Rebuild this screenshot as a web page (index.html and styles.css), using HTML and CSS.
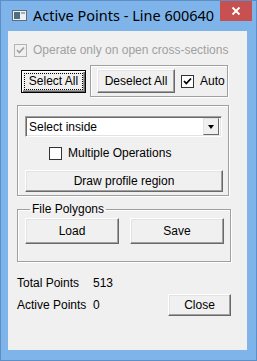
FILE: index.html
```html
<!DOCTYPE html>
<html lang="en">
  <head>
    <meta charset="UTF-8" />
    <title>Active Points - Line 600640</title>
    <link rel="stylesheet" href="styles.css">
  </head>
  <body>
    <div class="window">
      <!-- Title Bar -->
      <div class="titlebar">
        <svg class="app-icon" width="15" height="11" viewBox="0 0 15 11">
          <rect x="0.5" y="0.5" width="14" height="10" fill="#eef1f4" stroke="#5d6b78" />
          <rect x="2" y="2" width="6" height="7" fill="#4d6d80" />
          <rect x="9" y="2" width="4" height="2" fill="#9fb0bd" />
        </svg>
        <span class="title">Active Points - Line 600640</span>
        <div class="close-btn">
          <svg width="10" height="10" viewBox="0 0 10 10">
            <path d="M1.5 1.5 L8.5 8.5 M8.5 1.5 L1.5 8.5" stroke="#fff" stroke-width="1.8" />
          </svg>
        </div>
      </div>

      <!-- Dialog Client Area -->
      <div class="client">
        <label class="check disabled top-check">
          <span class="box"><svg width="9" height="9" viewBox="0 0 9 9"><path d="M1 4 L3.3 6.5 L8 1.5" /></svg></span>
          Operate only on open cross-sections
        </label>

        <div class="select-row">
          <button class="btn default select-all"><span class="focus">Select All</span></button>
          <div class="group deselect-group">
            <button class="btn deselect">Deselect All</button>
            <label class="check auto-check">
              <span class="box"><svg width="9" height="9" viewBox="0 0 9 9"><path d="M1 4 L3.3 6.5 L8 1.5" /></svg></span>
              Auto
            </label>
          </div>
        </div>

        <div class="group region-group">
          <div class="combo">
            <span class="combo-text">Select inside</span>
            <span class="combo-btn"><span class="arrow"></span></span>
          </div>
          <label class="check multi-check">
            <span class="box"></span>
            Multiple Operations
          </label>
          <button class="btn draw-btn">Draw profile region</button>
        </div>

        <fieldset class="files">
          <legend>File Polygons</legend>
          <button class="btn file-btn">Load</button>
          <button class="btn file-btn">Save</button>
        </fieldset>

        <div class="totals">
          <div class="stat-row">
            <span class="stat-label">Total Points</span>
            <span>513</span>
          </div>
          <div class="stat-row">
            <span class="stat-label">Active Points</span>
            <span>0</span>
            <button class="btn close">Close</button>
          </div>
        </div>
      </div>
    </div>
  </body>
</html>
```

FILE: styles.css
```css
/* General */
body {
  margin: 0;
  padding: 0;
  background: #ffffff;
  font-family: "Liberation Sans", Arial, sans-serif;
  font-size: 12px;
  color: #000;
}

/* Window Frame */
.window {
  width: 257px;
  height: 361px;
  box-sizing: border-box;
  border: 1px solid #5b8fc6;
  background: #7fb4ea;
  padding: 0 9px 10px 7px;
  display: flex;
  flex-direction: column;
}

.titlebar {
  height: 30px;
  display: flex;
  align-items: flex-start;
  position: relative;
}

.app-icon {
  margin: 9px 0 0 4px;
}

.title {
  margin: 4px 0 0 6px;
  font-family: "Noto Sans", sans-serif;
  font-size: 14.5px;
  line-height: 20px;
  color: #000;
}

.close-btn {
  position: absolute;
  top: 0;
  right: -5px;
  width: 32px;
  height: 20px;
  background: #c75050;
  display: flex;
  align-items: center;
  justify-content: center;
}

.client {
  flex: 1;
  background: #f0f0f0;
  padding: 0 0 0 9px;
}

/* Checkboxes */
.check {
  display: flex;
  align-items: center;
  line-height: 15px;
}

.box {
  width: 11px;
  height: 11px;
  border: 1px solid #333;
  background: #fff;
  margin-right: 6px;
  display: flex;
  align-items: center;
  justify-content: center;
}

.box path {
  fill: none;
  stroke: #000;
  stroke-width: 1.8;
}

.check.disabled {
  color: #a0a0a0;
}

.check.disabled .box {
  border-color: #b4b4b4;
  background: #f0f0f0;
}

.check.disabled .box path {
  stroke: #a0a0a0;
}

.top-check {
  margin: 12px 0 0 -3px;
}

/* Buttons */
.btn {
  font-family: inherit;
  font-size: 12px;
  color: #000;
  background: #f0f0f0;
  border: 1px solid;
  border-color: #fff #696969 #696969 #fff;
  box-shadow: inset -1px -1px 0 #a0a0a0, inset 1px 1px 0 #e3e3e3;
  padding: 0;
  margin: 0;
}

.btn.default {
  border: 1px solid #000;
  box-shadow: inset 1px 1px 0 #fff, inset -1px -1px 0 #696969, inset -2px -2px 0 #a0a0a0;
}

.focus {
  display: block;
  margin: 3px;
  height: 15px;
  line-height: 15px;
  outline: 1px dotted #000;
}

/* Group Boxes */
.group {
  border: 1px solid #a0a0a0;
  box-shadow: 1px 1px 0 #fff, inset 1px 1px 0 #fff;
}

.select-row {
  display: flex;
  align-items: flex-start;
  margin-top: 7px;
}

.select-all {
  width: 65px;
  height: 23px;
  margin: 5px 0 0 4px;
}

.deselect-group {
  width: 136px;
  height: 30px;
  margin-left: 4px;
  display: flex;
  align-items: flex-start;
}

.deselect {
  width: 78px;
  height: 24px;
  margin: 3px 0 0 6px;
}

.auto-check {
  margin: 8px 0 0 6px;
}

.region-group {
  width: 212px;
  height: 91px;
  box-sizing: border-box;
  margin-top: 8px;
  padding: 10px 0 0 7px;
}

.combo {
  width: 197px;
  height: 21px;
  box-sizing: border-box;
  background: #fff;
  border: 1px solid;
  border-color: #a0a0a0 #fff #fff #a0a0a0;
  box-shadow: inset 1px 1px 0 #696969, inset -1px -1px 0 #e3e3e3;
  display: flex;
  align-items: center;
  padding: 0 2px 0 3px;
}

.combo-text {
  flex: 1;
}

.combo-btn {
  width: 16px;
  height: 17px;
  background: #f0f0f0;
  border: 1px solid;
  border-color: #e3e3e3 #696969 #696969 #e3e3e3;
  box-sizing: border-box;
  display: flex;
  align-items: center;
  justify-content: center;
}

.arrow {
  width: 0;
  height: 0;
  border-left: 3.5px solid transparent;
  border-right: 3.5px solid transparent;
  border-top: 4px solid #000;
}

.multi-check {
  margin: 9px 0 0 24px;
}

.draw-btn {
  width: 198px;
  height: 22px;
  margin-top: 9px;
}

/* File Polygons */
.files {
  width: 212px;
  height: 60px;
  box-sizing: border-box;
  margin: 6px 0 0 0;
  padding: 2px 6px 0 7px;
  border: 1px solid #a0a0a0;
  box-shadow: 1px 1px 0 #fff, inset 1px 1px 0 #fff;
  display: flex;
  gap: 11px;
  align-items: flex-start;
}

.files legend {
  padding: 0 2px;
  margin-left: 5px;
  line-height: 14px;
}

.file-btn {
  width: 94px;
  height: 26px;
}

/* Totals */
.totals {
  margin-top: 13px;
}

.stat-row {
  display: flex;
  align-items: center;
  height: 15px;
}

.stat-label {
  width: 76px;
}

.stat-row + .stat-row {
  margin-top: 7px;
}

.close {
  width: 63px;
  height: 22px;
  margin-left: auto;
  margin-right: 16px;
}
```
